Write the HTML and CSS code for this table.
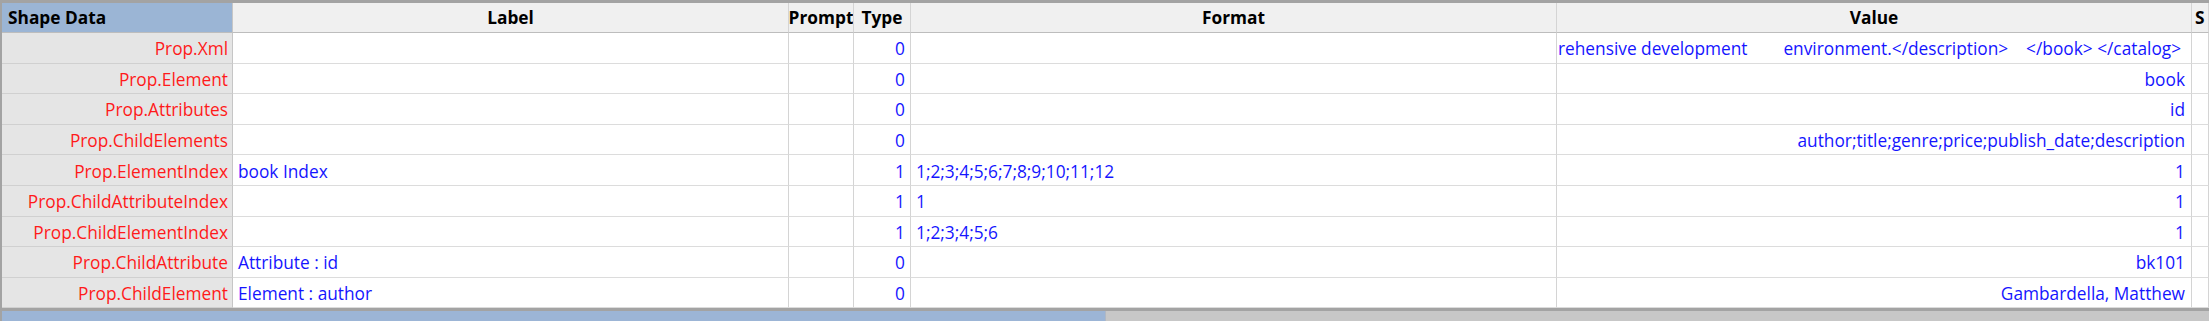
FILE: index.html
```html
<!DOCTYPE html>
<html>
<head>
<meta charset="utf-8">
<link rel="stylesheet" href="styles.css">
</head>
<body>
<div class="sheet">
  <div class="row head">
    <div class="c c1 hsel">Shape Data</div>
    <div class="c hc">Label</div>
    <div class="c hc">Prompt</div>
    <div class="c hc">Type</div>
    <div class="c hc">Format</div>
    <div class="c hc">Value</div>
    <div class="c hl">S</div>
  </div>
  <div class="row">
    <div class="c c1">Prop.Xml</div>
    <div class="c"></div><div class="c"></div>
    <div class="c num">0</div>
    <div class="c"></div>
    <div class="c val xml">rehensive development        environment.&lt;/description&gt;    &lt;/book&gt; &lt;/catalog&gt;</div>
    <div class="c"></div>
  </div>
  <div class="row">
    <div class="c c1">Prop.Element</div>
    <div class="c"></div><div class="c"></div>
    <div class="c num">0</div>
    <div class="c"></div>
    <div class="c val">book</div>
    <div class="c"></div>
  </div>
  <div class="row">
    <div class="c c1">Prop.Attributes</div>
    <div class="c"></div><div class="c"></div>
    <div class="c num">0</div>
    <div class="c"></div>
    <div class="c val">id</div>
    <div class="c"></div>
  </div>
  <div class="row">
    <div class="c c1">Prop.ChildElements</div>
    <div class="c"></div><div class="c"></div>
    <div class="c num">0</div>
    <div class="c"></div>
    <div class="c val">author;title;genre;price;publish_date;description</div>
    <div class="c"></div>
  </div>
  <div class="row">
    <div class="c c1">Prop.ElementIndex</div>
    <div class="c txt">book Index</div><div class="c"></div>
    <div class="c num">1</div>
    <div class="c txt">1;2;3;4;5;6;7;8;9;10;11;12</div>
    <div class="c val">1</div>
    <div class="c"></div>
  </div>
  <div class="row">
    <div class="c c1">Prop.ChildAttributeIndex</div>
    <div class="c"></div><div class="c"></div>
    <div class="c num">1</div>
    <div class="c txt">1</div>
    <div class="c val">1</div>
    <div class="c"></div>
  </div>
  <div class="row">
    <div class="c c1">Prop.ChildElementIndex</div>
    <div class="c"></div><div class="c"></div>
    <div class="c num">1</div>
    <div class="c txt">1;2;3;4;5;6</div>
    <div class="c val">1</div>
    <div class="c"></div>
  </div>
  <div class="row">
    <div class="c c1">Prop.ChildAttribute</div>
    <div class="c txt">Attribute : id</div><div class="c"></div>
    <div class="c num">0</div>
    <div class="c"></div>
    <div class="c val">bk101</div>
    <div class="c"></div>
  </div>
  <div class="row">
    <div class="c c1">Prop.ChildElement</div>
    <div class="c txt">Element : author</div><div class="c"></div>
    <div class="c num">0</div>
    <div class="c"></div>
    <div class="c val">Gambardella, Matthew</div>
    <div class="c"></div>
  </div>
  <div class="hscroll"><div class="thumb"></div></div>
</div>
</body>
</html>
```
FILE: styles.css
```css
html, body {
  margin: 0;
  padding: 0;
  background: #ffffff;
  overflow: hidden;
}
body {
  font-family: "Open Sans", "Noto Sans", sans-serif;
  font-size: 17.3px;
}
.sheet {
  width: 2209px;
  height: 321px;
  box-sizing: border-box;
  border-top: 3px solid #a3a3a3;
  border-left: 2px solid #a3a3a3;
  display: flex;
  flex-direction: column;
  overflow: hidden;
}
.row {
  display: grid;
  grid-template-columns: 231px 556px 65px 57px 646px 635px 1fr;
  height: 30.6px;
  flex: none;
}
.row.head {
  height: 30px;
}
.c {
  box-sizing: border-box;
  border-right: 1px solid #d4d4d4;
  border-bottom: 1px solid #dcdcdc;
  display: flex;
  align-items: center;
  white-space: pre;
  overflow: hidden;
  color: #1515ff;
  padding-top: 2px;
}
.head .c {
  background: #f0f0f0;
  border-bottom: 1px solid #bdbdbd;
  font-weight: 700;
  color: #000;
  padding-top: 0;
}
.head .hsel {
  background: #9bb5d5;
  justify-content: flex-start;
  padding-left: 6px;
}
.head .hc {
  justify-content: center;
}
.head .hl {
  padding-left: 3px;
}
.c1 {
  background: #e5e5e5;
  color: #ff1a1a;
  justify-content: flex-end;
  padding-right: 4px;
  border-right-color: #c6c6c6;
  border-bottom-color: #d0d0d0;
}
.num {
  justify-content: flex-end;
  padding-right: 5px;
}
.txt {
  padding-left: 5px;
}
.val {
  justify-content: flex-end;
  padding-right: 6px;
}
.val.xml {
  justify-content: flex-start;
  padding-left: 1px;
}
.hscroll {
  flex: 1;
  border-top: 3px solid #a3a3a3;
  background: #c7c7c7;
  display: flex;
}
.thumb {
  width: 1103px;
  background: #9cb5d6;
  border-right: 1px solid #b0b8c4;
}
```
